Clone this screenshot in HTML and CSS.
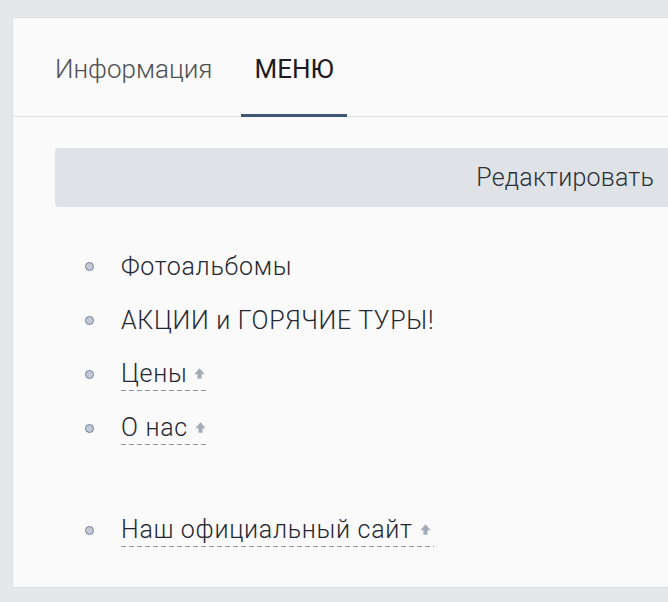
FILE: index.html
```html
<!DOCTYPE html>
<html lang="ru">
<head>
  <meta charset="UTF-8" />
  <meta name="viewport" content="width=device-width, initial-scale=1.0"/>
  <title>Меню</title>
  <link rel="stylesheet" href="styles.css">
</head>
<body>

  <div class="page">
    <div class="card">
      <div class="tabs">
        <div class="tab">Информация</div>
        <div class="tab active">МЕНЮ</div>
      </div>

      <div class="content">
        <div class="edit-bar">
          <span class="edit-link">Редактировать</span>
        </div>

        <ul class="menu">
          <li><span class="item">Фотоальбомы</span></li>
          <li><span class="item">АКЦИИ и ГОРЯЧИЕ ТУРЫ!</span></li>
          <li><span class="item link">Цены<svg class="arrow" viewBox="0 0 10 10"><path d="M5 1 L9 5.5 H6.6 V9 H3.4 V5.5 H1 Z"/></svg></span></li>
          <li><span class="item link">О нас<svg class="arrow" viewBox="0 0 10 10"><path d="M5 1 L9 5.5 H6.6 V9 H3.4 V5.5 H1 Z"/></svg></span></li>
          <li class="spacer"></li>
          <li><span class="item link">Наш официальный сайт<svg class="arrow" viewBox="0 0 10 10"><path d="M5 1 L9 5.5 H6.6 V9 H3.4 V5.5 H1 Z"/></svg></span></li>
        </ul>
      </div>
    </div>
  </div>

</body>
</html>
```

FILE: styles.css
```css
* {
  box-sizing: border-box;
}

body {
  margin: 0;
  padding: 0;
  background-color: #e6e7e9;
  font-family: Roboto, 'Noto Sans', sans-serif;
  color: #262c34;
  height: 602px;
  overflow: hidden;
}

.page {
  padding: 17px 0 0 12px;
  width: 668px;
  overflow: hidden;
}

.card {
  width: 703px;
  height: 571px;
  background-color: #fafafa;
  border: 1px solid #dcdddf;
  border-right: none;
}

.tabs {
  display: flex;
  padding-left: 29px;
  height: 99px;
  border-bottom: 1px solid #e1e2e4;
}

.tab {
  display: flex;
  align-items: center;
  padding: 5px 13px 0;
  font-size: 26px;
  font-weight: 300;
  color: #4d4f53;
  margin-right: 16px;
  border-bottom: 3px solid transparent;
  margin-bottom: -1px;
}

.tab.active {
  color: #1d1a22;
  font-weight: 400;
  border-bottom-color: #3d5675;
}

.content {
  padding: 31px 0 0 42px;
}

.edit-bar {
  height: 59px;
  background-color: #dfe3e8;
  border-radius: 4px;
  display: flex;
  align-items: center;
  justify-content: flex-end;
  padding-right: 18px;
  margin-right: 43px;
}

.edit-link {
  font-size: 25px;
  font-weight: 300;
  letter-spacing: 0.2px;
  color: #2c2f35;
}

.menu {
  list-style: none;
  margin: 32px 0 0;
  padding: 0 0 0 30px;
}

.menu li {
  height: 54px;
  display: flex;
  align-items: center;
  font-size: 25px;
  font-weight: 300;
}

.menu li::before {
  content: "";
  width: 7px;
  height: 7px;
  border: 1.5px solid #6f809b;
  background-color: #c3cad6;
  border-radius: 50%;
  margin-right: 27px;
  flex: none;
}

.menu li.spacer {
  height: 48px;
}

.menu li.spacer::before {
  display: none;
}

.item {
  color: #1f2833;
  letter-spacing: 0.7px;
}

.item.link {
  display: inline-flex;
  align-items: center;
  padding-bottom: 3px;
  margin-top: 2px;
  background-image: linear-gradient(to right, #8f959c 60%, transparent 60%);
  background-size: 8px 1px;
  background-repeat: repeat-x;
  background-position: left bottom;
}

.arrow {
  width: 13px;
  height: 13px;
  margin-left: 6px;
  margin-right: 2px;
  fill: #a3adb9;
}
```
